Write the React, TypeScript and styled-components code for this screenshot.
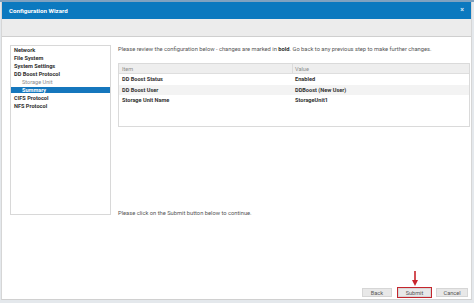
import { createGlobalStyle, styled } from 'styled-components';

const GlobalStyle = createGlobalStyle`
  html, body {
    margin: 0;
    padding: 0;
    background: #e4e8ec;
  }
  body {
    font-family: Roboto, "Liberation Sans", sans-serif;
  }
`;

const navItems = [
  { label: 'Network' },
  { label: 'File System' },
  { label: 'System Settings' },
  { label: 'DD Boost Protocol' },
  { label: 'Storage Unit', sub: true },
  { label: 'Summary', sub: true, active: true },
  { label: 'CIFS Protocol' },
  { label: 'NFS Protocol' },
];

const rows = [
  { item: 'DD Boost Status', value: 'Enabled' },
  { item: 'DD Boost User', value: 'DDBoost (New User)' },
  { item: 'Storage Unit Name', value: 'StorageUnit1' },
];

export default function App() {
  return (
    <>
      <GlobalStyle />
      <Frame>
        <Dialog>
          <TitleBar>
            <Title>Configuration Wizard</Title>
            <Close>×</Close>
          </TitleBar>
          <Toolbar />
          <Body>
            <Main>
              <NavPanel>
                {navItems.map((n) => (
                  <NavItem key={n.label} $sub={n.sub} $active={n.active}>
                    {n.label}
                  </NavItem>
                ))}
              </NavPanel>
              <Content>
                <Intro>
                  Please review the configuration below - changes are marked in <b>bold</b>. Go
                  back to any previous step to make further changes.
                </Intro>
                <Table>
                  <HeadRow>
                    <Cell $head>Item</Cell>
                    <Cell $head $divider>
                      Value
                    </Cell>
                  </HeadRow>
                  {rows.map((r, i) => (
                    <Row key={r.item} $striped={i % 2 === 1}>
                      <Cell>{r.item}</Cell>
                      <Cell>{r.value}</Cell>
                    </Row>
                  ))}
                </Table>
                <Hint>Please click on the Submit button below to continue.</Hint>
              </Content>
            </Main>
            <Footer>
              <Button $width={30}>Back</Button>
              <Marked>
                <Arrow width="6" height="15" viewBox="0 0 6 15">
                  <line x1="3" y1="0" x2="3" y2="10" stroke="#c8242b" strokeWidth="1.6" />
                  <polygon points="0,9 6,9 3,15" fill="#c8242b" />
                </Arrow>
                <Button $width={33}>Submit</Button>
              </Marked>
              <Button $width={32}>Cancel</Button>
            </Footer>
          </Body>
        </Dialog>
      </Frame>
    </>
  );
}

const Frame = styled.div`
  width: 474px;
  height: 303px;
  box-sizing: border-box;
  padding: 2px 2px 0 1px;
  background: linear-gradient(#7fa2c0 0 2px, #e4e8ec 2px);
  overflow: hidden;
`;

const Dialog = styled.div`
  display: flex;
  flex-direction: column;
  height: 298px;
  background: #ffffff;
  border-left: 1px solid #d6d6d6;
  border-right: 1px solid #d6d6d6;
  border-bottom: 1px solid #d0d0d0;
  box-sizing: border-box;
`;

const TitleBar = styled.div`
  display: flex;
  align-items: center;
  justify-content: space-between;
  height: 17px;
  padding: 0 7px 0 7px;
  background: #0b79bf;
  color: #ffffff;
`;

const Title = styled.div`
  font-size: 6.2px;
  font-weight: 700;
`;

const Close = styled.div`
  font-size: 7px;
  font-weight: 700;
  line-height: 7px;
  color: #cfe3f3;
`;

const Toolbar = styled.div`
  height: 17px;
  background: #ececec;
  border-bottom: 1px solid #cfcfcf;
`;

const Body = styled.div`
  flex: 1;
  display: flex;
  flex-direction: column;
`;

const Main = styled.div`
  display: flex;
  gap: 7px;
  padding: 8px 1px 0 8px;
`;

const NavPanel = styled.div`
  width: 101px;
  height: 170px;
  box-sizing: border-box;
  border: 1px solid #d8d8d8;
`;

const NavItem = styled.div<{ $sub?: boolean; $active?: boolean }>`
  height: ${({ $active }) => ($active ? '6px' : '8px')};
  line-height: ${({ $active }) => ($active ? '6px' : '8px')};
  margin: ${({ $active }) => ($active ? '1px 0' : '0')};
  padding-left: ${({ $sub }) => ($sub ? '11px' : '3px')};
  font-size: 5.6px;
  font-weight: ${({ $sub, $active }) => ($sub && !$active ? 400 : 700)};
  color: ${({ $sub, $active }) => ($active ? '#ffffff' : $sub ? '#8a8a8a' : '#2e2e2e')};
  background: ${({ $active }) => ($active ? '#1577bd' : 'transparent')};
  white-space: nowrap;
`;

const Content = styled.div`
  flex: 1;
  display: flex;
  flex-direction: column;
  height: 172px;
`;

const Intro = styled.div`
  font-size: 5.75px;
  line-height: 8px;
  color: #555555;
  white-space: nowrap;

  b {
    color: #2e2e2e;
  }
`;

const Table = styled.div`
  margin-top: 10px;
  height: 64px;
  box-sizing: border-box;
  border: 1px solid #dadada;
`;

const HeadRow = styled.div`
  display: grid;
  grid-template-columns: 173px 1fr;
  height: 9px;
  background: #eeeeee;
  border-bottom: 1px solid #dedede;
`;

const Row = styled.div<{ $striped?: boolean }>`
  display: grid;
  grid-template-columns: 173px 1fr;
  height: 10.5px;
  background: ${({ $striped }) => ($striped ? '#f3f3f3' : '#ffffff')};
`;

const Cell = styled.div<{ $head?: boolean; $divider?: boolean }>`
  display: flex;
  align-items: center;
  padding-left: ${({ $divider }) => ($divider ? '2px' : '3px')};
  border-left: ${({ $divider }) => ($divider ? '1px solid #dcdcdc' : 'none')};
  font-size: 5.6px;
  font-weight: ${({ $head }) => ($head ? 400 : 700)};
  color: ${({ $head }) => ($head ? '#8f8f8f' : '#333333')};
  white-space: nowrap;
`;

const Hint = styled.div`
  margin-top: auto;
  font-size: 5.75px;
  line-height: 8px;
  color: #555555;
`;

const Footer = styled.div`
  display: flex;
  justify-content: flex-end;
  align-items: center;
  gap: 4px;
  margin-top: auto;
  padding: 0 3px 1px 0;
`;

const Marked = styled.div`
  position: relative;
  display: flex;
  border: 1.5px solid #c4262d;
  margin-left: 1px;
`;

const Arrow = styled.svg`
  position: absolute;
  left: 50%;
  bottom: calc(100% + 2px);
  transform: translateX(-50%);
`;

const Button = styled.div<{ $width: number }>`
  width: ${({ $width }) => $width}px;
  height: 9px;
  display: flex;
  align-items: center;
  justify-content: center;
  box-sizing: border-box;
  background: #e8e8e8;
  border: 1px solid #d6d6d6;
  font-size: 5.6px;
  color: #555555;
`;
